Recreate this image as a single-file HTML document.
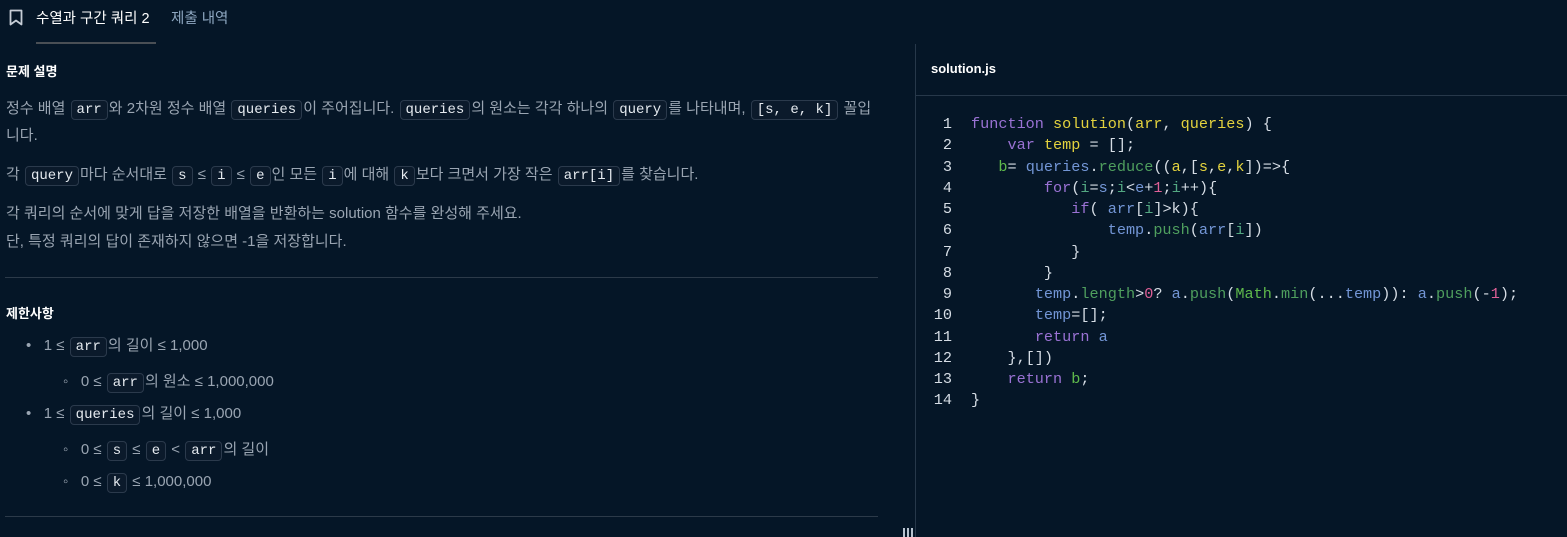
<!DOCTYPE html>
<html><head><meta charset="utf-8"><style>
*{margin:0;padding:0;box-sizing:border-box}
body{width:1567px;height:537px;background:#051627;overflow:hidden;font-family:"Liberation Sans","Noto Sans CJK KR",sans-serif;color:#9aa5b2;position:relative}
.a{position:absolute;white-space:nowrap}
.c{font-family:"Liberation Mono","DejaVu Sans Mono",monospace;font-size:14px;color:#e6ebf0;border:1px solid #2b3a4c;background:#0b1a2b;border-radius:4px;padding:1px 5px;margin:0 1px}
.p{font-size:15px;line-height:20px}
.h{font-size:13px;font-weight:bold;color:#fff}
.code{position:absolute;left:916px;top:114px;font-family:"Liberation Mono","DejaVu Sans Mono",monospace;font-size:15.2px;line-height:21.25px;white-space:pre;color:#d6dde5}
.ln{position:absolute;left:916px;width:36px;text-align:right;top:114px;font-family:"Liberation Mono",monospace;font-size:15.2px;line-height:21.25px;white-space:pre;color:#d6dde5}
.k{color:#9a72d4}.y{color:#e3d23e}.g{color:#5fba4c}.b{color:#7396d6}.m{color:#4f9f5e}.n{color:#e06097}.t{color:#53a882}
</style></head><body>
<svg class="a" style="left:9px;top:9px" width="14" height="17" viewBox="0 0 14 17"><path d="M1.5 1.5h11v14l-5.5-4-5.5 4z" fill="none" stroke="#c6cdd6" stroke-width="1.8" stroke-linejoin="round"/></svg>
<div class="a" style="left:36px;top:7px;font-size:14.5px;color:#fff">수열과 구간 쿼리 2</div>
<div class="a" style="left:171px;top:7px;font-size:14.5px;color:#8fa8c2">제출 내역</div>
<div class="a" style="left:36px;top:42px;width:120px;height:2px;background:#4a4f55"></div>
<div class="a" style="left:915px;top:44px;width:1px;height:493px;background:#27384a"></div>
<div class="a" style="left:916px;top:95px;width:651px;height:1px;background:#27384a"></div>
<div class="a h" style="left:931px;top:61px">solution.js</div>

<div class="a h" style="left:6px;top:61px">문제 설명</div>
<div class="a p" style="left:6px;top:99px">정수 배열 <span class="c">arr</span>와 2차원 정수 배열 <span class="c">queries</span>이 주어집니다. <span class="c">queries</span>의 원소는 각각 하나의 <span class="c">query</span>를 나타내며, <span class="c">[s, e, k]</span> 꼴입</div>
<div class="a p" style="left:6px;top:126px">니다.</div>
<div class="a p" style="left:6px;top:165px">각 <span class="c">query</span>마다 순서대로 <span class="c">s</span> ≤ <span class="c">i</span> ≤ <span class="c">e</span>인 모든 <span class="c">i</span>에 대해 <span class="c">k</span>보다 크면서 가장 작은 <span class="c">arr[i]</span>를 찾습니다.</div>
<div class="a p" style="left:6px;top:204px">각 쿼리의 순서에 맞게 답을 저장한 배열을 반환하는 solution 함수를 완성해 주세요.</div>
<div class="a p" style="left:6px;top:232px">단, 특정 쿼리의 답이 존재하지 않으면 -1을 저장합니다.</div>
<div class="a" style="left:5px;top:277px;width:873px;height:1px;background:#2c3a49"></div>
<div class="a h" style="left:6px;top:303px">제한사항</div>
<div class="a p" style="left:26px;top:336px">•&nbsp;&nbsp; 1 ≤ <span class="c">arr</span>의 길이 ≤ 1,000</div>
<div class="a p" style="left:63px;top:372px">◦&nbsp;&nbsp; 0 ≤ <span class="c">arr</span>의 원소 ≤ 1,000,000</div>
<div class="a p" style="left:26px;top:404px">•&nbsp;&nbsp; 1 ≤ <span class="c">queries</span>의 길이 ≤ 1,000</div>
<div class="a p" style="left:63px;top:440px">◦&nbsp;&nbsp; 0 ≤ <span class="c">s</span> ≤ <span class="c">e</span> &lt; <span class="c">arr</span>의 길이</div>
<div class="a p" style="left:63px;top:472px">◦&nbsp;&nbsp; 0 ≤ <span class="c">k</span> ≤ 1,000,000</div>
<div class="a" style="left:5px;top:516px;width:873px;height:1px;background:#2c3a49"></div>
<div class="a" style="left:903px;top:528px;width:2px;height:9px;background:#b8c4d0"></div>
<div class="a" style="left:907px;top:528px;width:2px;height:9px;background:#b8c4d0"></div>
<div class="a" style="left:911px;top:528px;width:2px;height:9px;background:#b8c4d0"></div>

<div class="ln">1
2
3
4
5
6
7
8
9
10
11
12
13
14</div>
<div class="code" style="left:971px"><span class="k">function</span> <span class="y">solution</span>(<span class="y">arr</span>, <span class="y">queries</span>) {
    <span class="k">var</span> <span class="y">temp</span> = [];
   <span class="g">b</span>= <span class="b">queries</span>.<span class="m">reduce</span>((<span class="y">a</span>,[<span class="y">s</span>,<span class="y">e</span>,<span class="y">k</span>])=>{
        <span class="k">for</span>(<span class="t">i</span>=<span class="b">s</span>;<span class="t">i</span>&lt;<span class="b">e</span>+<span class="n">1</span>;<span class="t">i</span>++){
           <span class="k">if</span>( <span class="b">arr</span>[<span class="t">i</span>]>k){
               <span class="b">temp</span>.<span class="m">push</span>(<span class="b">arr</span>[<span class="t">i</span>])
           }
        }
       <span class="b">temp</span>.<span class="m">length</span>><span class="n">0</span>? <span class="b">a</span>.<span class="m">push</span>(<span class="g">Math</span>.<span class="m">min</span>(...<span class="b">temp</span>)): <span class="b">a</span>.<span class="m">push</span>(-<span class="n">1</span>);
       <span class="b">temp</span>=[];
       <span class="k">return</span> <span class="b">a</span>
    },[])
    <span class="k">return</span> <span class="g">b</span>;
}</div>
</body></html>
